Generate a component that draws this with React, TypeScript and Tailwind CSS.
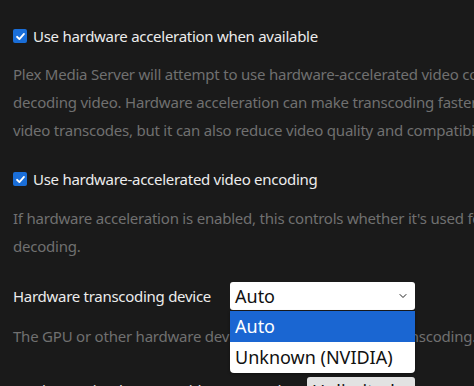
import { ChevronDown } from "lucide-react";

function Check({ label }: { label: string }) {
  return (
    <div className="flex h-[20px] items-center gap-[6px]">
      <span className="flex h-[14px] w-[14px] items-center justify-center rounded-[2px] bg-[#1a6ed8]">
        <svg viewBox="0 0 12 12" className="h-[11px] w-[11px]">
          <path d="M2.2 6.3 4.8 8.8 9.8 3.2" fill="none" stroke="#fff" strokeWidth="2" strokeLinecap="round" strokeLinejoin="round" />
        </svg>
      </span>
      <span className="text-[15px] tracking-[-0.28px] text-[#ececec]">{label}</span>
    </div>
  );
}

export default function App() {
  return (
    <div
      className="relative h-[386px] w-[474px] overflow-hidden bg-[#1a1a1a] pl-[13px] pt-[26px] whitespace-nowrap"
      style={{ fontFamily: '"Noto Sans", sans-serif' }}
    >
      <Check label="Use hardware acceleration when available" />
      <p className="mt-[14px] text-[15px] leading-[28px] tracking-[-0.22px] text-[#707070]">
        Plex Media Server will attempt to use hardware-accelerated video codecs when encoding and
        <br />
        decoding video. Hardware acceleration can make transcoding faster and allow more simultaneous
        <br />
        video transcodes, but it can also reduce video quality and compatibility.
      </p>

      <div className="mt-[25px]">
        <Check label="Use hardware-accelerated video encoding" />
      </div>
      <p className="mt-[15px] text-[15px] leading-[28px] tracking-[-0.22px] text-[#707070]">
        If hardware acceleration is enabled, this controls whether it's used for encoding as well as
        <br />
        decoding.
      </p>

      <div className="mt-[22px] flex h-[28px] items-center">
        <span className="w-[217px] text-[15px] tracking-[-0.28px] text-[#ececec]">Hardware transcoding device</span>
        <div className="flex h-[28px] w-[185px] items-center justify-between rounded-[3px] bg-white pl-[5px] pr-[6px]">
          <span className="text-[18px] text-[#111]">Auto</span>
          <ChevronDown size={12} strokeWidth={2} className="text-[#222]" />
        </div>
      </div>
      <p className="mt-[12px] text-[15px] leading-[28px] tracking-[-0.22px] text-[#707070]">
        The GPU or other hardware device that will be used for transcoding.
      </p>

      <div className="mt-[27px] flex h-[28px] items-start">
        <span className="w-[294px] pt-[2px] text-[15px] tracking-[-0.28px] text-[#ececec]">Maximum simultaneous video transcode</span>
        <div className="h-[28px] w-[108px] rounded-[3px] bg-[#e2e2e2] pl-[5px] pt-[3px] text-[18px] leading-[22px] text-[#111]">Unlimited</div>
      </div>

      <div className="absolute left-[230px] top-[311px] w-[185px] overflow-hidden rounded-b-[4px] bg-white text-[18px] shadow-[0_1px_3px_rgba(0,0,0,0.4)]">
        <div className="flex h-[31px] items-center bg-[#1a66d2] pl-[5px] text-white">Auto</div>
        <div className="flex h-[31px] items-center pl-[5px] text-[#111]">Unknown (NVIDIA)</div>
      </div>
    </div>
  );
}
